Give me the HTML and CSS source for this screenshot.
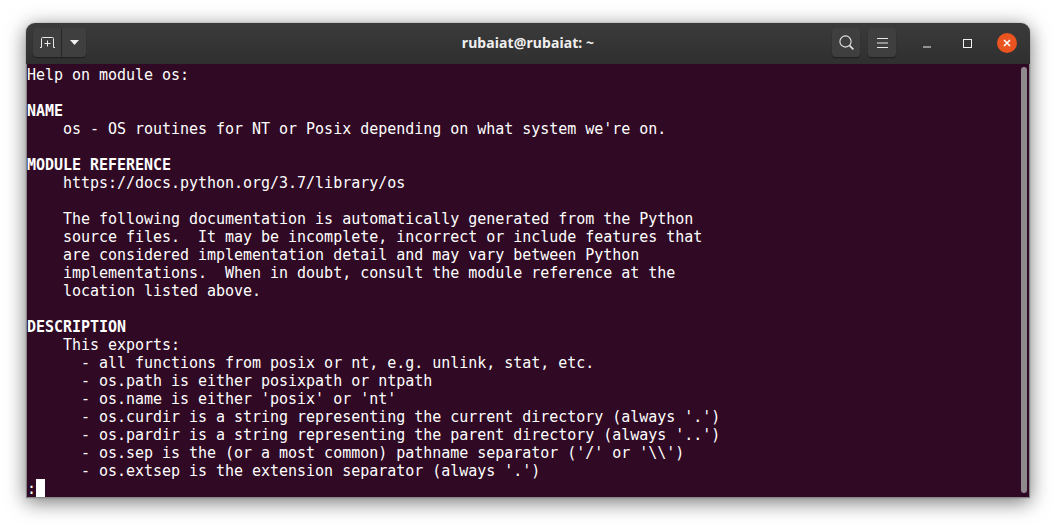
FILE: index.html
```html
<!DOCTYPE html>
<html lang="en">
<head>
<meta charset="utf-8">
<title>rubaiat@rubaiat: ~</title>
<link rel="stylesheet" href="styles.css">
</head>
<body>
<main class="window">
  <header class="titlebar">
    <div class="group">
      <button class="btn btn-new" aria-label="New tab">
        <svg width="15" height="11" viewBox="0 0 15 11"><path d="M0 10.5H1.5V1.5Q1.5 0.5 2.5 0.5H12.5Q13.5 0.5 13.5 1.5V10.5H15" fill="none" stroke="#e8e8e8" stroke-width="1"/><path d="M7.5 3.5V9.5M4.5 6.5H10.5" stroke="#e8e8e8" stroke-width="1"/></svg>
      </button>
      <button class="btn btn-drop" aria-label="Menu">
        <svg width="9" height="5" viewBox="0 0 9 5"><path d="M0 0H9L4.5 5Z" fill="#f0f0f0"/></svg>
      </button>
    </div>
    <h1 class="title">rubaiat@rubaiat: ~</h1>
    <div class="actions">
      <button class="btn btn-square" aria-label="Search">
        <svg width="15" height="15" viewBox="0 0 15 15"><circle cx="6.5" cy="6.5" r="5.6" fill="none" stroke="#e4e4e4" stroke-width="1.1"/><path d="M10.6 10.6L14.4 14.4" stroke="#e4e4e4" stroke-width="1.6"/></svg>
      </button>
      <button class="btn btn-square" aria-label="Menu">
        <svg width="11" height="10" viewBox="0 0 11 10"><path d="M0 0.5H11M0 5H11M0 9.5H11" stroke="#e8e8e8" stroke-width="1"/></svg>
      </button>
      <div class="wm">
        <button class="wm-btn" aria-label="Minimize"><svg width="8" height="9" viewBox="0 0 8 9"><path d="M0 8H8" stroke="#f0f0f0" stroke-width="1.2"/></svg></button>
        <button class="wm-btn" aria-label="Maximize"><svg width="9" height="9" viewBox="0 0 9 9"><rect x="0.5" y="0.5" width="8" height="8" fill="none" stroke="#f0f0f0" stroke-width="1"/></svg></button>
        <button class="wm-btn wm-close" aria-label="Close"><svg width="8" height="8" viewBox="0 0 8 8"><path d="M1 1L7 7M7 1L1 7" stroke="#fff" stroke-width="1.6"/></svg></button>
      </div>
    </div>
  </header>
  <div class="term">
<pre class="output">Help on module os:

<b>NAME</b>
    os - OS routines for NT or Posix depending on what system we're on.

<b>MODULE REFERENCE</b>
    https://docs.python.org/3.7/library/os

    The following documentation is automatically generated from the Python
    source files.  It may be incomplete, incorrect or include features that
    are considered implementation detail and may vary between Python
    implementations.  When in doubt, consult the module reference at the
    location listed above.

<b>DESCRIPTION</b>
    This exports:
      - all functions from posix or nt, e.g. unlink, stat, etc.
      - os.path is either posixpath or ntpath
      - os.name is either 'posix' or 'nt'
      - os.curdir is a string representing the current directory (always '.')
      - os.pardir is a string representing the parent directory (always '..')
      - os.sep is the (or a most common) pathname separator ('/' or '\\')
      - os.extsep is the extension separator (always '.')
:<span class="cursor"></span></pre>
    <div class="scrollbar"><div class="thumb"></div></div>
  </div>
</main>
</body>
</html>
```
FILE: styles.css
```css
html, body {
  margin: 0;
  background: #fff;
}
body {
  padding: 23px 26px 29px;
  height: 527px;
  box-sizing: border-box;
  overflow: hidden;
}
.window {
  width: 1004px;
  height: 475px;
  display: flex;
  flex-direction: column;
  border-radius: 9px 9px 0 0;
  overflow: hidden;
  box-shadow: 0 0 1px rgba(0,0,0,.6), 0 4px 20px rgba(0,0,0,.55);
}
.titlebar {
  height: 41px;
  flex: none;
  display: flex;
  align-items: center;
  justify-content: space-between;
  padding: 5px 13px 7px 7px;
  box-sizing: border-box;
  background: linear-gradient(#3b3b3b, #2f2f2f);
  position: relative;
}
.group { display: flex; }
.btn {
  height: 29px;
  padding: 0;
  border: 0;
  margin: 0;
  display: flex;
  align-items: center;
  justify-content: center;
  background: #3f3f3f;
  box-shadow: 0 1px 1px rgba(0,0,0,.4);
}
.btn-new { width: 29px; border-radius: 4px 0 0 4px; border-right: 1px solid #2a2a2a; }
.btn-drop { width: 24px; border-radius: 0 4px 4px 0; }
.btn-square { width: 28px; border-radius: 4px; }
.title {
  position: absolute;
  left: 0;
  right: 0;
  top: 11px;
  margin: 0;
  text-align: center;
  font: 700 14px/18px "Noto Sans", sans-serif;
  letter-spacing: .1px;
  color: #efefef;
}
.actions { display: flex; align-items: center; gap: 8px; position: relative; }
.wm { display: flex; align-items: center; margin-left: 3px; padding-top: 1px; }
.wm-btn {
  width: 40px;
  height: 20px;
  padding: 0;
  border: 0;
  background: none;
  display: flex;
  align-items: center;
  justify-content: center;
}
.wm-close {
  width: 20px;
  margin-left: 10px;
  border-radius: 50%;
  background: #e95420;
}
.term {
  flex: 1;
  min-height: 0;
  display: flex;
  justify-content: space-between;
  background: #300a24;
  padding-top: 2px;
  box-sizing: border-box;
  border: 1px solid #888;
  border-width: 0 1px 1px;
}
.output {
  margin: 0;
  font: 400 15px/18px "DejaVu Sans Mono", monospace;
  letter-spacing: -.027px;
  color: #fff;
  overflow: hidden;
}
.output b { font-weight: 700; }
.cursor {
  display: inline-block;
  width: 9px;
  height: 18px;
  vertical-align: top;
  position: relative;
  top: -1px;
  background: #fff;
}
.scrollbar {
  width: 14px;
  flex: none;
  display: flex;
  justify-content: center;
  padding: 1px 0 4px 3px;
  box-sizing: border-box;
}
.thumb {
  width: 6px;
  height: 100%;
  border-radius: 3px;
  background: #8f8a8e;
}
```
